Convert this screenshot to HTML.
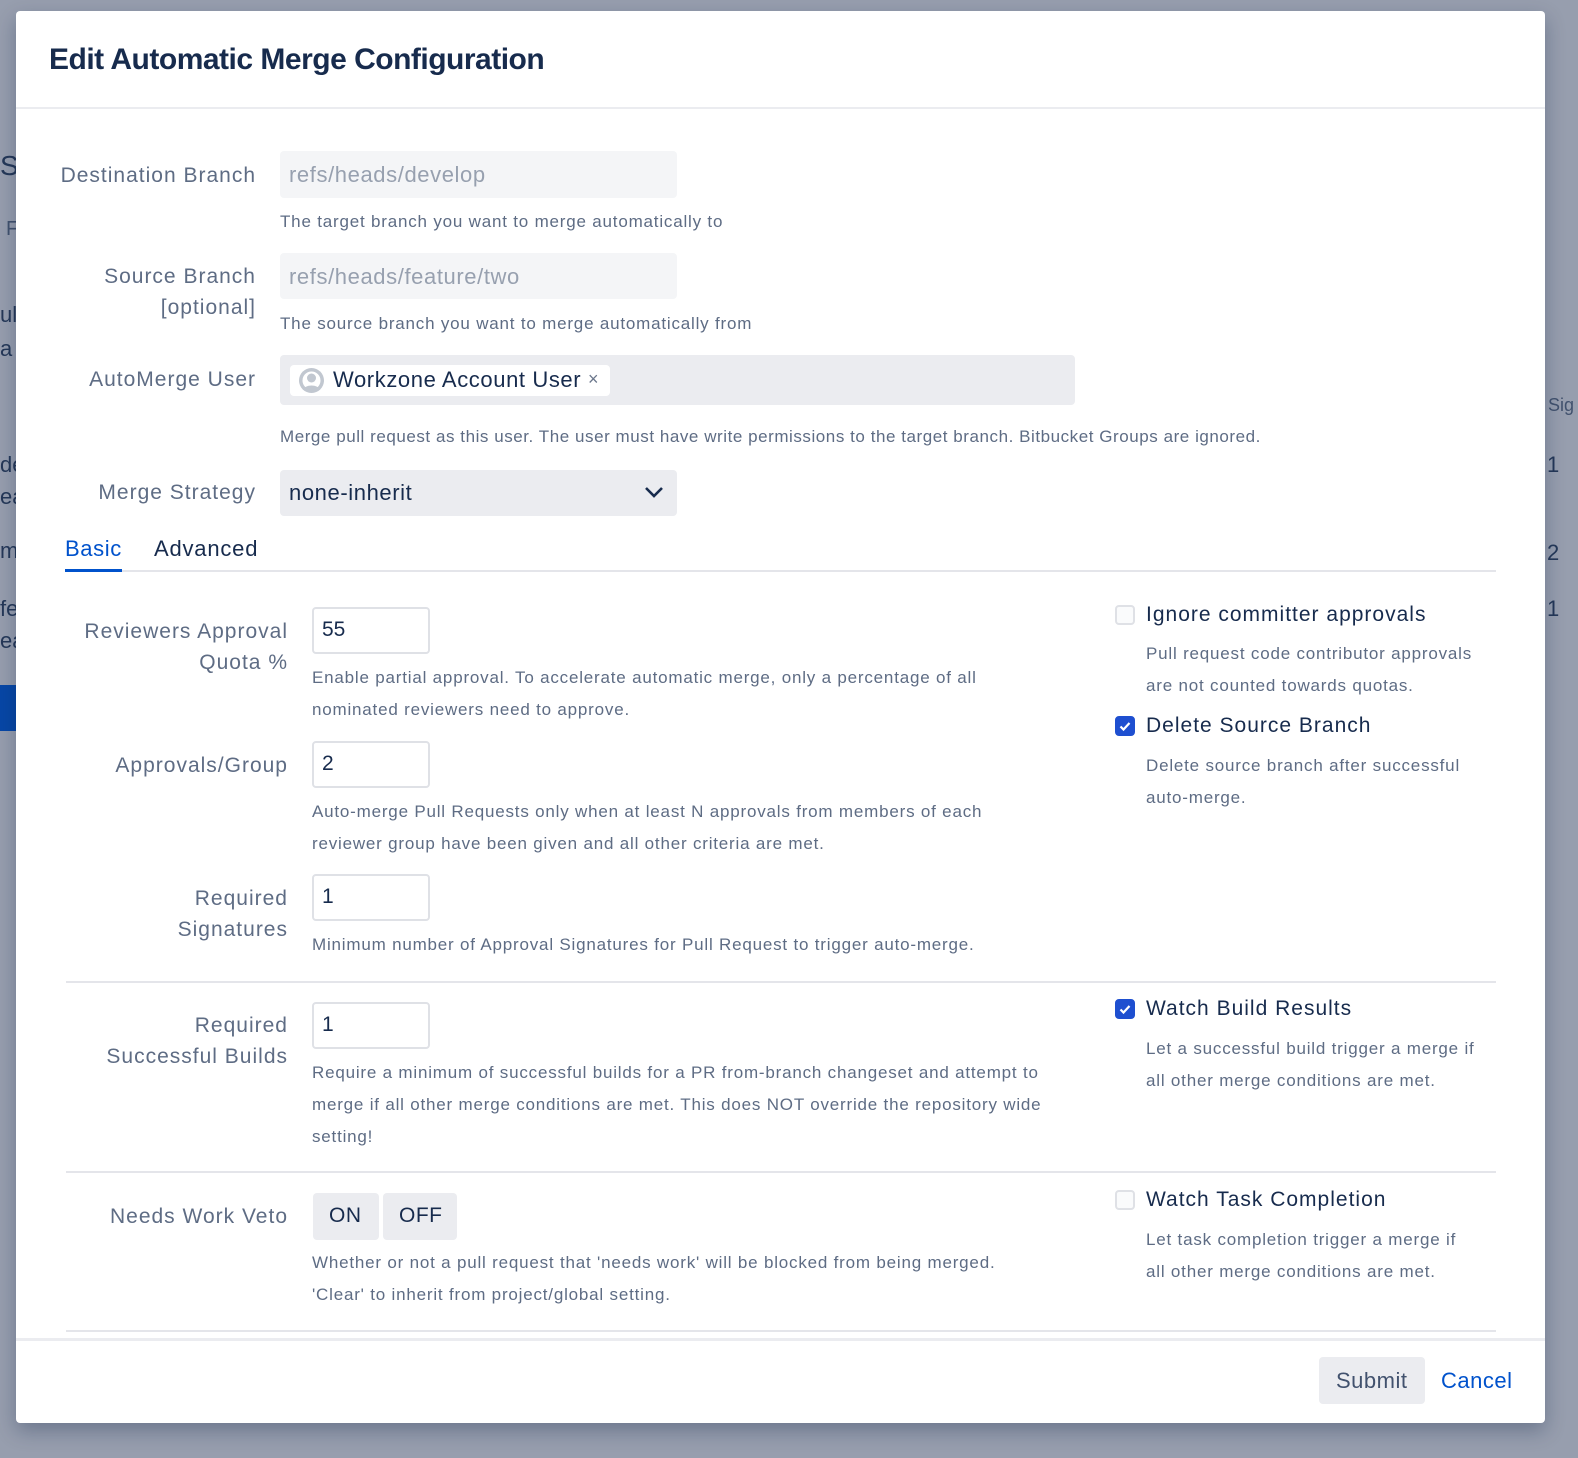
<!DOCTYPE html>
<html><head><meta charset="utf-8"><style>
*{box-sizing:border-box;margin:0;padding:0}
body{width:1578px;height:1458px;background:#979eae;font-family:"Liberation Sans",sans-serif;position:relative;overflow:hidden;color:#172b4d}
.a{position:absolute;white-space:nowrap}
.m{position:absolute;left:16px;top:11px;width:1529px;height:1412px;background:#fff;border-radius:4px;box-shadow:0 8px 20px rgba(9,30,66,.3)}
.lbl{position:absolute;font-size:21px;color:#5e6c84;text-align:right;line-height:31px;letter-spacing:1px;white-space:nowrap}
.h{position:absolute;font-size:17px;color:#5e6c84;line-height:32px;white-space:nowrap;letter-spacing:0.8px}
.inp{position:absolute;border-radius:4px}
.num{position:absolute;width:118px;height:47px;border:2px solid #dfe1e6;border-radius:4px;font-size:21px;padding:9px 8px;background:#fff}
.hr{position:absolute;left:66px;width:1430px;height:2px;background:#e4e5ea}
.cb{position:absolute;left:1115px;width:20px;height:20px;border-radius:4px;border:2px solid #dfe1e6;background:#fafbfc}
.cb.on{background:#1e4fd0;border-color:#1e4fd0}
.cl{position:absolute;left:1146px;font-size:21px;color:#172b4d;letter-spacing:1px;white-space:nowrap}
</style></head><body>
<div class="a" style="left:0;top:150px;font-size:28px;color:#253858">S</div>
<div class="a" style="left:6px;top:218px;font-size:20px;color:#42526e">F</div>
<div class="a" style="left:0;top:302px;font-size:22px;color:#253858">ul</div>
<div class="a" style="left:0;top:336px;font-size:22px;color:#253858">a</div>
<div class="a" style="left:0;top:452px;font-size:22px;color:#253858">de</div>
<div class="a" style="left:0;top:484px;font-size:22px;color:#253858">ea</div>
<div class="a" style="left:0;top:538px;font-size:22px;color:#253858">m</div>
<div class="a" style="left:0;top:596px;font-size:22px;color:#253858">fe</div>
<div class="a" style="left:0;top:628px;font-size:22px;color:#253858">ea</div>
<div style="position:absolute;left:0;top:685px;width:16px;height:46px;background:#0747a6"></div>
<div class="a" style="left:1548px;top:395px;font-size:18px;color:#42526e">Sig</div>
<div class="a" style="left:1547px;top:452px;font-size:22px;color:#253858">1</div>
<div class="a" style="left:1547px;top:540px;font-size:22px;color:#253858">2</div>
<div class="a" style="left:1547px;top:596px;font-size:22px;color:#253858">1</div>
<div class="m"></div>
<div class="a" style="left:49px;top:43px;font-size:30px;font-weight:bold;color:#172b4d;letter-spacing:-0.5px">Edit Automatic Merge Configuration</div>
<div style="position:absolute;left:16px;top:107px;width:1529px;height:2px;background:#ebecf0"></div>

<div class="lbl" style="right:1322px;top:160px">Destination Branch</div>
<div class="inp" style="left:280px;top:151px;width:397px;height:47px;background:#f4f5f7"></div>
<div class="a" style="left:289px;top:162px;font-size:22px;color:#97a0af;letter-spacing:0.6px">refs/heads/develop</div>
<div class="h" style="left:280px;top:206px">The target branch you want to merge automatically to</div>

<div class="lbl" style="right:1322px;top:261px">Source Branch<br>[optional]</div>
<div class="inp" style="left:280px;top:253px;width:397px;height:46px;background:#f4f5f7"></div>
<div class="a" style="left:289px;top:264px;font-size:22px;color:#97a0af;letter-spacing:0.6px">refs/heads/feature/two</div>
<div class="h" style="left:280px;top:308px">The source branch you want to merge automatically from</div>

<div class="lbl" style="right:1322px;top:364px">AutoMerge User</div>
<div class="inp" style="left:280px;top:355px;width:795px;height:50px;background:#ebecf0"></div>
<div class="inp" style="left:290px;top:365px;width:320px;height:31px;background:#fff"></div>
<svg style="position:absolute;left:299px;top:368px" width="25" height="25" viewBox="0 0 25 25"><circle cx="12.5" cy="12.5" r="12.5" fill="#c1c7d0"/><circle cx="12.5" cy="12.5" r="9" fill="#fff"/><circle cx="12.5" cy="10" r="4.5" fill="#c1c7d0"/><path d="M4 22c2-6 15-6 17 0z" fill="#c1c7d0"/></svg>
<div class="a" style="left:333px;top:367px;font-size:22px;color:#172b4d;letter-spacing:0.6px">Workzone Account User</div>
<div class="a" style="left:588px;top:369px;font-size:18px;color:#6b778c">×</div>
<div class="h" style="left:280px;top:421px;letter-spacing:0.55px">Merge pull request as this user. The user must have write permissions to the target branch. Bitbucket Groups are ignored.</div>

<div class="lbl" style="right:1322px;top:477px">Merge Strategy</div>
<div class="inp" style="left:280px;top:470px;width:397px;height:46px;background:#ebecf0"></div>
<div class="a" style="left:289px;top:480px;font-size:22px;color:#172b4d;letter-spacing:0.6px">none-inherit</div>
<svg style="position:absolute;left:644px;top:485px" width="20" height="14"><path d="M2 3l8 8 8-8" stroke="#172b4d" stroke-width="2.6" fill="none"/></svg>

<div class="a" style="left:65px;top:536px;font-size:22px;color:#0052cc;letter-spacing:0.6px">Basic</div>
<div class="a" style="left:154px;top:536px;font-size:22px;color:#172b4d;letter-spacing:0.8px">Advanced</div>
<div class="hr" style="top:570px"></div>
<div style="position:absolute;left:65px;top:569px;width:57px;height:3px;background:#0052cc"></div>

<div class="lbl" style="right:1290px;top:616px">Reviewers Approval<br>Quota %</div>
<div class="num" style="left:312px;top:607px">55</div>
<div class="h" style="left:312px;top:662px">Enable partial approval. To accelerate automatic merge, only a percentage of all<br>nominated reviewers need to approve.</div>

<div class="lbl" style="right:1290px;top:750px">Approvals/Group</div>
<div class="num" style="left:312px;top:741px">2</div>
<div class="h" style="left:312px;top:796px">Auto-merge Pull Requests only when at least N approvals from members of each<br>reviewer group have been given and all other criteria are met.</div>

<div class="lbl" style="right:1290px;top:883px">Required<br>Signatures</div>
<div class="num" style="left:312px;top:874px">1</div>
<div class="h" style="left:312px;top:929px">Minimum number of Approval Signatures for Pull Request to trigger auto-merge.</div>

<div class="hr" style="top:981px"></div>

<div class="lbl" style="right:1290px;top:1010px">Required<br>Successful Builds</div>
<div class="num" style="left:312px;top:1002px">1</div>
<div class="h" style="left:312px;top:1057px">Require a minimum of successful builds for a PR from-branch changeset and attempt to<br>merge if all other merge conditions are met. This does NOT override the repository wide<br>setting!</div>

<div class="hr" style="top:1171px"></div>

<div class="lbl" style="right:1290px;top:1201px">Needs Work Veto</div>
<div class="inp" style="left:313px;top:1193px;width:66px;height:47px;background:#ebecf0"></div>
<div class="inp" style="left:383px;top:1193px;width:74px;height:47px;background:#ebecf0"></div>
<div class="a" style="left:329px;top:1204px;font-size:21px;color:#172b4d;letter-spacing:0.5px">ON</div>
<div class="a" style="left:399px;top:1204px;font-size:21px;color:#172b4d;letter-spacing:0.5px">OFF</div>
<div class="h" style="left:312px;top:1247px">Whether or not a pull request that 'needs work' will be blocked from being merged.<br>'Clear' to inherit from project/global setting.</div>

<div class="hr" style="top:1330px"></div>

<div class="cb" style="top:605px"></div>
<div class="cl" style="top:603px">Ignore committer approvals</div>
<div class="h" style="left:1146px;top:638px">Pull request code contributor approvals<br>are not counted towards quotas.</div>
<div class="cb on" style="top:716px"></div><svg style="position:absolute;left:1115px;top:716px" width="20" height="20"><path d="M5.5 10.5l3 3 6-6.5" stroke="#fff" stroke-width="2.2" fill="none"/></svg>
<div class="cl" style="top:714px">Delete Source Branch</div>
<div class="h" style="left:1146px;top:750px">Delete source branch after successful<br>auto-merge.</div>
<div class="cb on" style="top:999px"></div><svg style="position:absolute;left:1115px;top:999px" width="20" height="20"><path d="M5.5 10.5l3 3 6-6.5" stroke="#fff" stroke-width="2.2" fill="none"/></svg>
<div class="cl" style="top:997px">Watch Build Results</div>
<div class="h" style="left:1146px;top:1033px">Let a successful build trigger a merge if<br>all other merge conditions are met.</div>
<div class="cb" style="top:1190px"></div>
<div class="cl" style="top:1188px">Watch Task Completion</div>
<div class="h" style="left:1146px;top:1224px">Let task completion trigger a merge if<br>all other merge conditions are met.</div>

<div style="position:absolute;left:16px;top:1338px;width:1529px;height:3px;background:#ebecf0"></div>
<div class="inp" style="left:1319px;top:1357px;width:106px;height:47px;background:#ebecf0"></div>
<div class="a" style="left:1336px;top:1368px;font-size:22px;color:#42526e;letter-spacing:0.5px">Submit</div>
<div class="a" style="left:1441px;top:1368px;font-size:22px;color:#0052cc;letter-spacing:0.5px">Cancel</div>
</body></html>
